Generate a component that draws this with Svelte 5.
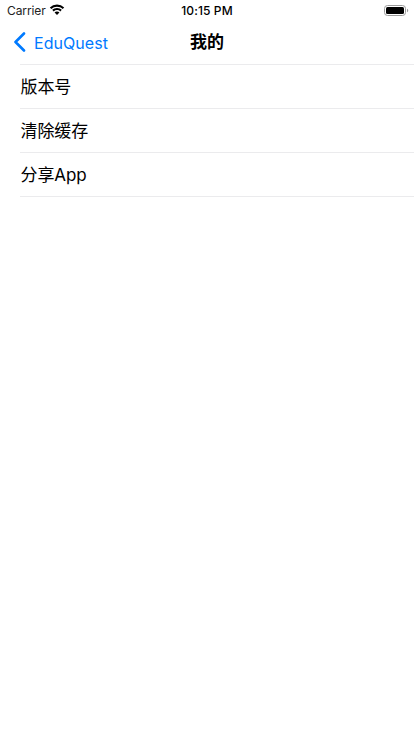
<script>
  const rows = ['版本号', '清除缓存', '分享App'];
</script>

<div class="page">
  <div class="status">
    <div class="status-left">
      <span class="carrier">Carrier</span>
      <svg class="wifi" width="16" height="12" viewBox="0 0 16 12">
        <path d="M8 2.700c2.200 0 4.200.85 5.700 2.250l1.500-1.550A10.400 10.400 0 0 0 8 .5 10.400 10.400 0 0 0 .8 3.400l1.500 1.550A8.300 8.300 0 0 1 8 2.700z" />
        <path d="M8 6.100c1.250 0 2.400.47 3.300 1.280l1.500-1.570A7 7 0 0 0 8 3.900a7 7 0 0 0-4.800 1.910l1.500 1.570A4.900 4.900 0 0 1 8 6.100z" />
        <path d="M8 7.500c-.95 0-1.800.35-2.450.92L8 11l2.450-2.580A3.700 3.700 0 0 0 8 7.500z" />
      </svg>
    </div>
    <span class="time">10:15 PM</span>
    <svg class="battery" width="25" height="11" viewBox="0 0 25 11">
      <rect x="0.500" y="0.500" width="21" height="10" rx="3" fill="none" stroke="#9a9a9a" />
      <rect x="2" y="2" width="18" height="7" rx="1.500" fill="#000" />
      <path d="M23 3.700v3.600c.7-.3 1.200-1 1.200-1.800S23.700 4 23 3.700z" fill="#9a9a9a" />
    </svg>
  </div>

  <div class="nav">
    <div class="back">
      <svg width="13" height="20" viewBox="0 0 13 20">
        <path d="M11 1.500 2.500 10l8.500 8.500" fill="none" stroke="#007aff" stroke-width="2.600" stroke-linecap="round" stroke-linejoin="round" />
      </svg>
      <span>EduQuest</span>
    </div>
    <h1>我的</h1>
  </div>

  <ul class="list">
    {#each rows as row}
      <li>{row}</li>
    {/each}
  </ul>
</div>

<style>
  :global(body) {
    margin: 0;
    background: #fff;
  }
  .page {
    width: 414px;
    height: 736px;
    overflow: hidden;
    font-family: "Liberation Sans", "Noto Sans CJK SC", sans-serif;
    color: #000;
  }
  .status {
    height: 20px;
    position: relative;
    display: flex;
    align-items: center;
    justify-content: space-between;
    padding: 0 5px 0 7px;
  }
  .status-left {
    display: flex;
    align-items: center;
    gap: 3px;
  }
  .carrier {
    font-size: 12px;
    font-family: Inter, sans-serif;
    letter-spacing: -0.1px;
    color: #222;
  }
  .wifi {
    fill: #000;
    margin-top: -1px;
  }
  .time {
    position: absolute;
    left: 0;
    right: 0;
    text-align: center;
    font-family: Inter, sans-serif;
    font-size: 12px;
    font-weight: 500;
    letter-spacing: 0.1px;
  }
  .nav {
    height: 44px;
    position: relative;
    display: flex;
    align-items: center;
    justify-content: center;
  }
  .back {
    position: absolute;
    left: 13px;
    top: 0;
    height: 44px;
    display: flex;
    align-items: center;
    gap: 8px;
    color: #007aff;
    font-family: Inter, sans-serif;
    font-size: 16px;
    letter-spacing: 0.05px;
  }
  .back span {
    padding-top: 2px;
  }
  h1 {
    margin: 0 0 4px;
    font-size: 17px;
    font-weight: 700;
    font-family: "Noto Sans CJK SC", sans-serif;
  }
  .list {
    list-style: none;
    margin: 0;
    padding: 0 0 0 20px;
  }
  .list::before {
    content: '';
    display: block;
    height: 1px;
    background: #ebebed;
  }
  li {
    height: 40px;
    display: flex;
    align-items: center;
    font-size: 17px;
    border-bottom: 1px solid #ebebed;
    font-family: Inter, "Noto Sans CJK SC", sans-serif;
    letter-spacing: -0.1px;
    padding: 0 0 3px 0.5px;
  }
</style>
